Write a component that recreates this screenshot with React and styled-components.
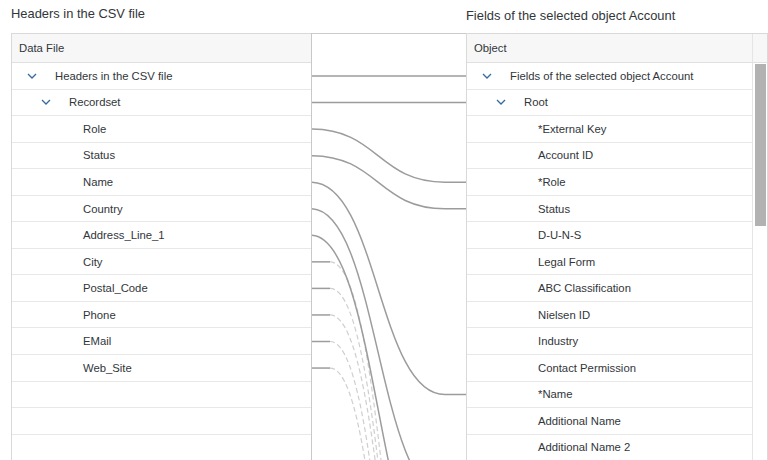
import React from "react";
import styled, { createGlobalStyle } from "styled-components";

const ROW_H = 26.55;
const FONT = `"Liberation Sans", Arial, sans-serif`;

const GlobalStyle = createGlobalStyle`
  html, body {
    margin: 0;
    padding: 0;
    height: 460px;
    overflow: hidden;
    background: #ffffff;
    font-family: ${FONT};
    color: #32363a;
  }
  #root { height: 460px; }
`;

const Page = styled.div`
  display: grid;
  grid-template-columns: 300px 155px 302px;
  padding-left: 11px;
  height: 460px;
  overflow: hidden;
  box-sizing: border-box;
`;

const Section = styled.section`
  display: flex;
  flex-direction: column;
  min-height: 0;
`;

const Title = styled.div`
  height: 33px;
  box-sizing: border-box;
  padding-top: ${(p) => p.$offset}px;
  font-size: 12.9px;
  line-height: 16px;
  color: #32363a;
  white-space: nowrap;
`;

const Table = styled.div`
  flex: 1;
  min-height: 0;
  overflow: hidden;
  border-top: 1px solid #d9d9d9;
  border-left: 1px solid #d9d9d9;
  border-right: ${(p) => (p.$closed ? "1px solid #d9d9d9" : "none")};
  display: grid;
  grid-template-columns: ${(p) => (p.$scroll ? "1fr 14px" : "1fr")};
  grid-template-rows: 29px 1fr;
`;

const HeaderCell = styled.div`
  box-sizing: border-box;
  height: 29px;
  background: #f7f7f7;
  border-bottom: 1px solid #e0e0e0;
  border-right: ${(p) => (p.$divider ? "1px solid #e5e5e5" : "none")};
  display: flex;
  align-items: center;
  padding-left: 7px;
  font-size: 11.3px;
  color: #32363a;
`;

const Rows = styled.div`
  display: flex;
  flex-direction: column;
  overflow: hidden;
  border-right: ${(p) => (p.$divider ? "1px solid #e5e5e5" : "none")};
`;

const Row = styled.div`
  box-sizing: border-box;
  flex: 0 0 ${ROW_H}px;
  height: ${ROW_H}px;
  border-bottom: 1px solid #e8e8e8;
  display: flex;
  align-items: center;
  padding-left: ${(p) => 12 + p.$level * 14}px;
  font-size: 11.3px;
  color: #32363a;
  white-space: nowrap;
`;

const Expander = styled.span`
  flex: 0 0 16px;
  width: 16px;
  height: 16px;
  margin-right: 15px;
  display: flex;
  align-items: center;
  justify-content: center;
`;

const LeafSpacer = styled.span`
  flex: 0 0 31px;
`;

const Connector = styled.div`
  border-top: 1px solid #cccccc;
  border-left: 1px solid #c8c8c8;
  overflow: hidden;
  min-height: 0;
`;

const ConnectorSvg = styled.svg`
  display: block;
`;

const ScrollTrack = styled.div`
  display: flex;
  flex-direction: column;
  padding: 1px 1px 0 2px;
`;

const ScrollThumb = styled.div`
  height: 162px;
  background: #b2b2b2;
`;

const Chevron = () => (
  <svg width="10" height="6" viewBox="0 0 10 6">
    <path d="M1 1 L5 5 L9 1" fill="none" stroke="#346aa0" strokeWidth="1.3" />
  </svg>
);

const TreeRow = ({ level, expandable, children }) => (
  <Row $level={level}>
    {expandable ? (
      <Expander>
        <Chevron />
      </Expander>
    ) : (
      <LeafSpacer />
    )}
    {children}
  </Row>
);

const leftRows = [
  { t: "Headers in the CSV file", l: 0, e: true },
  { t: "Recordset", l: 1, e: true },
  { t: "Role", l: 2 },
  { t: "Status", l: 2 },
  { t: "Name", l: 2 },
  { t: "Country", l: 2 },
  { t: "Address_Line_1", l: 2 },
  { t: "City", l: 2 },
  { t: "Postal_Code", l: 2 },
  { t: "Phone", l: 2 },
  { t: "EMail", l: 2 },
  { t: "Web_Site", l: 2 },
  { t: "", l: 2 },
  { t: "", l: 2 },
  { t: "", l: 2 },
  { t: "", l: 2 },
];

const rightRows = [
  { t: "Fields of the selected object Account", l: 0, e: true },
  { t: "Root", l: 1, e: true },
  { t: "*External Key", l: 2 },
  { t: "Account ID", l: 2 },
  { t: "*Role", l: 2 },
  { t: "Status", l: 2 },
  { t: "D-U-N-S", l: 2 },
  { t: "Legal Form", l: 2 },
  { t: "ABC Classification", l: 2 },
  { t: "Nielsen ID", l: 2 },
  { t: "Industry", l: 2 },
  { t: "Contact Permission", l: 2 },
  { t: "*Name", l: 2 },
  { t: "Additional Name", l: 2 },
  { t: "Additional Name 2", l: 2 },
  { t: "", l: 2 },
];

const rowY = (i) => 63 + i * ROW_H + 13;

const X0 = 311;
const XS = 330;
const XE = 445;
const X1 = 466;

const solid = [
  { a: 2, b: rowY(4) },
  { a: 3, b: rowY(5) },
  { a: 4, b: rowY(12) },
  { a: 5, b: 495 },
  { a: 6, b: 582 },
];

const dashed = [
  { a: 7, b: 772 },
  { a: 8, b: 797 },
  { a: 9, b: 806 },
  { a: 10, b: 877 },
  { a: 11, b: 929 },
];

const curve = (x0, y0, x1, y1) => {
  const mx = (x0 + x1) / 2;
  return `M${x0} ${y0} C${mx} ${y0} ${mx} ${y1} ${x1} ${y1}`;
};

const Connections = () => (
  <ConnectorSvg width="154" height="426" viewBox="0 0 154 426">
    <g transform="translate(-312 -34)" fill="none" strokeLinecap="butt">
      <path d={`M${X0} ${rowY(0)} L${X1} ${rowY(0)}`} stroke="#9c9c9c" strokeWidth="1.5" />
      <path d={`M${X0} ${rowY(1)} L${X1} ${rowY(1)}`} stroke="#9c9c9c" strokeWidth="1.5" />
      {dashed.map((d) => (
        <g key={d.a}>
          <path d={`M${X0} ${rowY(d.a)} L${XS} ${rowY(d.a)}`} stroke="#9c9c9c" strokeWidth="1.5" />
          <path d={curve(XS, rowY(d.a), XE, d.b)} stroke="#cfcfcf" strokeWidth="1.2" strokeDasharray="5 3" />
        </g>
      ))}
      {solid.map((s) => (
        <path
          key={s.a}
          d={`${curve(X0, rowY(s.a), XE, s.b)} L${X1} ${s.b}`}
          stroke="#9c9c9c"
          strokeWidth="1.5"
        />
      ))}
    </g>
  </ConnectorSvg>
);

export default function App() {
  return (
    <>
      <GlobalStyle />
      <Page>
        <Section>
          <Title $offset={6}>Headers in the CSV file</Title>
          <Table>
            <HeaderCell>Data File</HeaderCell>
            <Rows>
              {leftRows.map((r, i) => (
                <TreeRow key={i} level={r.l} expandable={r.e}>
                  {r.t}
                </TreeRow>
              ))}
            </Rows>
          </Table>
        </Section>
        <Section>
          <Title $offset={6} />
          <Connector>
            <Connections />
          </Connector>
        </Section>
        <Section>
          <Title $offset={8}>Fields of the selected object Account</Title>
          <Table $scroll $closed>
            <HeaderCell $divider>Object</HeaderCell>
            <HeaderCell />
            <Rows $divider>
              {rightRows.map((r, i) => (
                <TreeRow key={i} level={r.l} expandable={r.e}>
                  {r.t}
                </TreeRow>
              ))}
            </Rows>
            <ScrollTrack>
              <ScrollThumb />
            </ScrollTrack>
          </Table>
        </Section>
      </Page>
    </>
  );
}
